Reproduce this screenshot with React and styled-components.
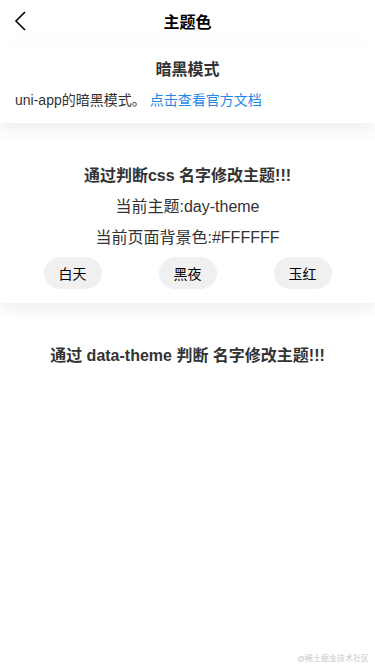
import React from 'react'
import styled, { createGlobalStyle } from 'styled-components'

const GlobalStyle = createGlobalStyle`
    html, body {
        margin: 0;
        padding: 0;
        background: #ffffff;
        font-family: "Liberation Sans", "Noto Sans CJK SC", sans-serif;
    }
`
const Page = styled.div`
    position: relative;
    width: 375px;
    height: 667px;
    overflow: hidden;
    background: #ffffff;
    color: #333333;
`
const NavBar = styled.div`
    display: flex;
    align-items: center;
    justify-content: center;
    height: 42px;
    position: relative;
`
const BackBtn = styled.div`
    position: absolute;
    left: 9px;
    top: 9px;
    width: 24px;
    height: 24px;
    display: flex;
    align-items: center;
    justify-content: center;
`
const NavTitle = styled.h1`
    margin: 0;
    font-size: 16px;
    font-weight: 700;
    color: #000000;
`
const Card = styled.div`
    display: flex;
    flex-direction: column;
    align-items: ${props => props.left ? 'stretch' : 'center'};
    padding: ${props => props.pad};
    margin-bottom: ${props => props.gap || '0'};
    background: #ffffff;
    box-shadow: ${props => props.shadow ? '0 6px 14px rgba(0, 0, 0, 0.07)' : 'none'};
`
const CardTitle = styled.h2`
    margin: 0;
    text-align: center;
    font-size: 16px;
    font-weight: 700;
    line-height: 22px;
    color: #333333;
`
const Desc = styled.p`
    margin: 10px 0 0;
    font-size: 14px;
    line-height: 18px;
    color: #333333;
`
const DocLink = styled.span`
    color: #1f87e8;
    margin-left: 4px;
`
const Line = styled.p`
    margin: 9px 0 0;
    font-size: 16px;
    line-height: 22px;
    color: #333333;
`
const BtnRow = styled.div`
    display: flex;
    justify-content: space-around;
    align-self: stretch;
    padding: 0 15px;
    margin-top: 8px;
`
const ThemeBtn = styled.div`
    width: 58px;
    height: 32px;
    border-radius: 16px;
    background: #f0f0f0;
    display: flex;
    align-items: center;
    justify-content: center;
    font-size: 14px;
    color: #000000;
`
const Watermark = styled.div`
    position: absolute;
    right: 6px;
    bottom: 4px;
    font-size: 8px;
    color: #c8c8c8;
`

const themes = ['白天', '黑夜', '玉红']

const App = () => {
    return (
        <Page>
            <GlobalStyle />
            <NavBar>
                <BackBtn>
                    <svg width="14" height="20" viewBox="0 0 14 20">
                        <path d="M11 1 L2 10 L11 19" fill="none" stroke="#000" strokeWidth="1.6" />
                    </svg>
                </BackBtn>
                <NavTitle>主题色</NavTitle>
            </NavBar>
            <Card left shadow pad="17px 15px 14px" gap="17px">
                <CardTitle>暗黑模式</CardTitle>
                <Desc>uni-app的暗黑模式。<DocLink>点击查看官方文档</DocLink></Desc>
            </Card>
            <Card shadow pad="25px 0 14px" gap="42px">
                <CardTitle>通过判断css 名字修改主题!!!</CardTitle>
                <Line>当前主题:day-theme</Line>
                <Line>当前页面背景色:#FFFFFF</Line>
                <BtnRow>
                    {
                        themes.map((item, index) => (
                            <ThemeBtn key={index}>{item}</ThemeBtn>
                        ))
                    }
                </BtnRow>
            </Card>
            <Card pad="0">
                <CardTitle>通过 data-theme 判断 名字修改主题!!!</CardTitle>
            </Card>
            <Watermark>@稀土掘金技术社区</Watermark>
        </Page>
    )
}

export default App
